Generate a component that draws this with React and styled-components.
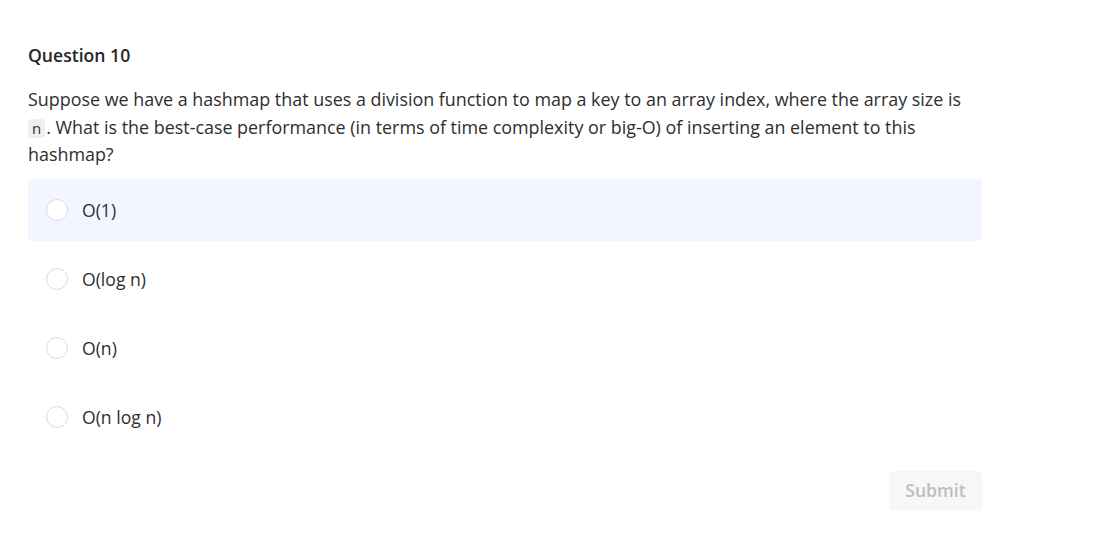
import styled, { createGlobalStyle } from "styled-components";

const GlobalStyle = createGlobalStyle`
  body {
    margin: 0;
    background: #ffffff;
    font-family: "Open Sans", "Noto Sans", sans-serif;
    color: #2e2e2e;
  }
`;

const Page = styled.div`
  padding: 42px 0 0 28px;
  width: 954px;
`;

const Title = styled.h3`
  margin: 0 0 18px;
  font-size: 17.6px;
  font-weight: 600;
  line-height: 26px;
  color: #262626;
`;

const Prompt = styled.p`
  margin: 0 0 10px;
  font-size: 17.9px;
  line-height: 27.5px;
  color: #2e2e2e;
`;

const Code = styled.code`
  display: inline-block;
  font-family: "Open Sans", "Noto Sans", sans-serif;
  font-size: 15px;
  line-height: 19px;
  background: #efefef;
  border-radius: 3px;
  padding: 0 4px;
  margin-right: 1px;
`;

const Options = styled.div`
  display: flex;
  flex-direction: column;
  gap: 7px;
`;

const Option = styled.label`
  display: flex;
  align-items: center;
  gap: 14px;
  height: 62px;
  padding: 0 18px;
  border-radius: 4px;
  background: ${(p) => (p.$hover ? "#f3f6fe" : "transparent")};
  font-size: 17.6px;
  color: #2e2e2e;
  cursor: pointer;
`;

const Radio = styled.span`
  box-sizing: border-box;
  width: 22px;
  height: 22px;
  border-radius: 50%;
  border: 1.5px solid #d8dce6;
  background: #fff;
  flex-shrink: 0;
`;

const Footer = styled.div`
  display: flex;
  justify-content: flex-end;
  margin-top: 23px;
`;

const Submit = styled.button`
  font-family: "Open Sans", "Noto Sans", sans-serif;
  font-size: 17.6px;
  font-weight: 600;
  color: #bdbdbd;
  background: #f7f7f7;
  border: none;
  border-radius: 4px;
  width: 93px;
  height: 39px;
`;

const choices = ["O(1)", "O(log n)", "O(n)", "O(n log n)"];

export default function App() {
  return (
    <>
      <GlobalStyle />
      <Page>
        <Title>Question 10</Title>
        <Prompt>
          Suppose we have a hashmap that uses a division function to map a key to an array index, where the array size is{" "}
          <Code>n</Code>. What is the best-case performance (in terms of time complexity or big-O) of inserting an element to this hashmap?
        </Prompt>
        <Options>
          {choices.map((c, i) => (
            <Option key={c} $hover={i === 0}>
              <Radio />
              {c}
            </Option>
          ))}
        </Options>
        <Footer>
          <Submit disabled>Submit</Submit>
        </Footer>
      </Page>
    </>
  );
}
